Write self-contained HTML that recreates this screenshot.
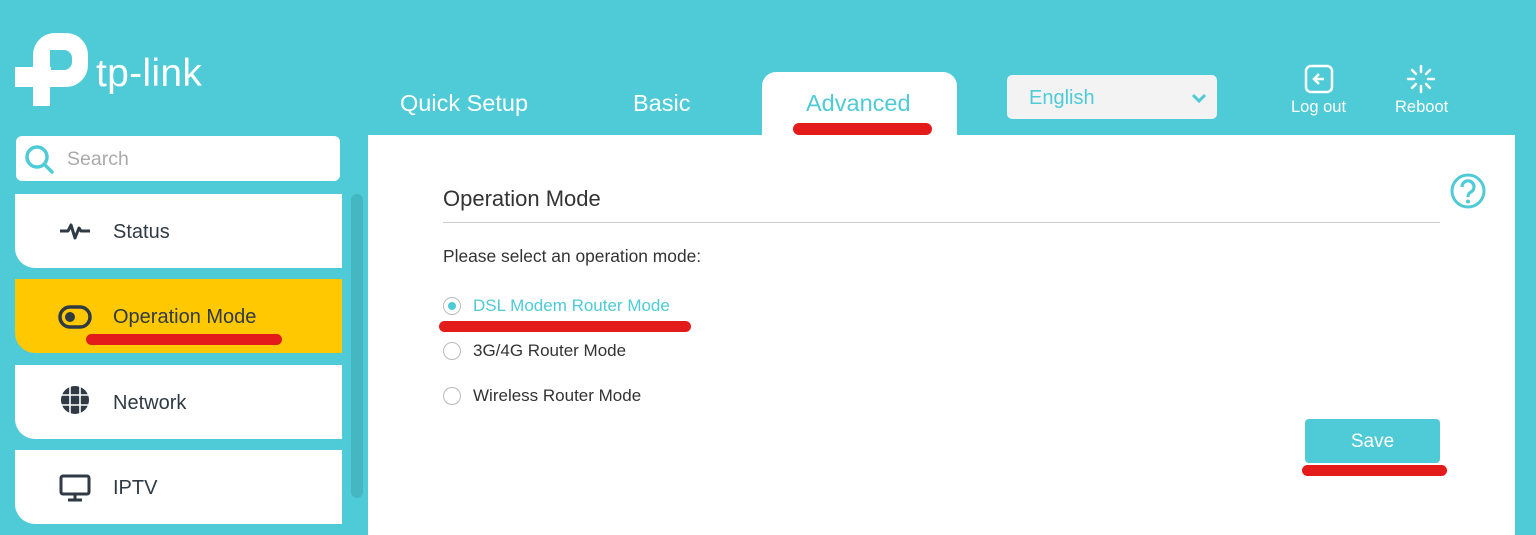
<!DOCTYPE html>
<html><head><meta charset="utf-8"><style>
*{margin:0;padding:0;box-sizing:border-box}
body{width:1536px;height:534px;background:#4ecbd6;position:relative;overflow:hidden;font-family:"Liberation Sans",Arial,sans-serif}
.abs{position:absolute}
.nav{color:#fff;font-size:23.5px;top:90px}
.side{position:absolute;left:15px;width:327px;height:74px;background:#fff;border-bottom-left-radius:20px}
.side span{position:absolute;left:98px;top:27px;font-size:20px;color:#2f3a44}
.side svg{position:absolute;left:43px;top:22px}
.red{position:absolute;background:#e41b1b;border-radius:6px;height:11px}
.radio{position:absolute;left:443px;width:18px;height:18px;border-radius:50%;border:1.5px solid #bbb;background:#fff}
.opt{position:absolute;left:473px;font-size:17px;color:#333}
</style></head><body>
<!-- logo -->
<svg class="abs" style="left:0;top:0" width="95" height="115" viewBox="0 0 95 115">
<path fill-rule="evenodd" fill="#fff" d="M33 106 V55 A22 22 0 0 1 55 33 H66 A22 22 0 0 1 88 55 V65 A22 22 0 0 1 66 87 H50 V106 Z M50 50 V70 H64 A8 8 0 0 0 72 62 V58 A8 8 0 0 0 64 50 Z"/>
<rect x="15" y="67" width="36" height="20" fill="#fff"/>
</svg>
<div class="abs" style="left:96px;top:52px;color:#fff;font-size:39px;letter-spacing:0.3px">tp-link</div>
<!-- search -->
<div class="abs" style="left:16px;top:136px;width:324px;height:45px;background:#fff;border-radius:6px"></div>
<svg class="abs" style="left:24px;top:143px" width="32" height="32" viewBox="0 0 32 32"><circle cx="13" cy="14" r="10" fill="none" stroke="#4ecbd6" stroke-width="3.5"/><path d="M21 22 L28 29" stroke="#4ecbd6" stroke-width="3.5" stroke-linecap="round"/></svg>
<div class="abs" style="left:67px;top:148px;font-size:19.5px;color:#aaa">Search</div>
<!-- sidebar -->
<div class="side" style="top:194px"><svg width="34" height="30" viewBox="0 0 34 30"><path d="M2 15 H10 L13 9 L17 22 L21 12 L23 15 H32" fill="none" stroke="#2f3a44" stroke-width="3" stroke-linejoin="round"/></svg><span>Status</span></div>
<div class="side" style="top:279px;background:#ffc800"><svg width="34" height="30" viewBox="0 0 34 30"><rect x="2" y="6" width="30" height="20" rx="10" fill="none" stroke="#2f3a44" stroke-width="3.5"/><circle cx="12" cy="16" r="5" fill="#2f3a44"/></svg><span>Operation Mode</span></div>
<div class="red" style="left:86px;top:334px;width:196px"></div>
<div class="side" style="top:365px"><svg width="34" height="34" viewBox="0 0 34 34" style="top:18px"><circle cx="17" cy="17" r="14" fill="#2f3a44"/><path d="M3 12H31M3 22H31M12 3V31M22 3V31" stroke="#fff" stroke-width="1.6"/></svg><span>Network</span></div>
<div class="side" style="top:450px"><svg width="34" height="30" viewBox="0 0 34 30"><rect x="3" y="4" width="28" height="18" rx="2" fill="none" stroke="#2f3a44" stroke-width="3"/><path d="M17 22V27M10 28H24" stroke="#2f3a44" stroke-width="3"/></svg><span>IPTV</span></div>
<div class="abs" style="left:351px;top:194px;width:12px;height:304px;background:#45b7c3;border-radius:6px"></div>
<!-- top nav -->
<div class="abs nav" style="left:400px">Quick Setup</div>
<div class="abs nav" style="left:633px">Basic</div>
<div class="abs" style="left:762px;top:72px;width:195px;height:70px;background:#fff;border-radius:14px 14px 0 0"></div>
<div class="abs nav" style="left:806px;color:#4ecbd6">Advanced</div>
<div class="red" style="left:793px;top:123px;width:139px;height:12px"></div>
<div class="abs" style="left:1007px;top:75px;width:210px;height:44px;background:#f3f3f3;border-radius:5px"></div>
<div class="abs" style="left:1029px;top:87px;font-size:20px;color:#4ecbd6">English</div>
<svg class="abs" style="left:1190px;top:92px" width="18" height="12" viewBox="0 0 18 12"><path d="M3 3L9 9L15 3" fill="none" stroke="#4ecbd6" stroke-width="3"/></svg>
<svg class="abs" style="left:1304px;top:64px" width="30" height="30" viewBox="0 0 30 30"><rect x="2" y="2" width="26" height="26" rx="5" fill="none" stroke="#fff" stroke-width="2.5"/><path d="M15 10L10 15L15 20M11 15H20" fill="none" stroke="#fff" stroke-width="2.5"/></svg>
<div class="abs" style="left:1291px;top:98px;color:#fff;font-size:16.5px">Log out</div>
<svg class="abs" style="left:1406px;top:64px" width="30" height="30" viewBox="0 0 30 30" stroke="#fff" stroke-width="2.5" stroke-linecap="round"><path d="M15 2V8M15 22V28M2 15H8M22 15H28M6 6L10 10M20 20L24 24M24 6L20 10M10 20L6 24"/></svg>
<div class="abs" style="left:1395px;top:98px;color:#fff;font-size:16.5px">Reboot</div>
<!-- main -->
<div class="abs" style="left:368px;top:135px;width:1147px;height:400px;background:#fff"></div>
<svg class="abs" style="left:1449px;top:172px" width="38" height="38" viewBox="0 0 38 38"><circle cx="19" cy="19" r="16" fill="none" stroke="#4ecbd6" stroke-width="3"/><path d="M13 15a6 6 0 1 1 9 5c-2 1-3 2-3 5" fill="none" stroke="#4ecbd6" stroke-width="3.2"/><circle cx="19" cy="29.5" r="2" fill="#4ecbd6"/></svg>
<div class="abs" style="left:443px;top:186px;font-size:22px;color:#333">Operation Mode</div>
<div class="abs" style="left:443px;top:222px;width:997px;height:1px;background:#ccc"></div>
<div class="abs" style="left:443px;top:246px;font-size:17.4px;color:#333">Please select an operation mode:</div>
<div class="radio" style="top:297px"><div style="position:absolute;left:3.5px;top:3.5px;width:8px;height:8px;border-radius:50%;background:#4ecbd6"></div></div>
<div class="opt" style="top:296px;color:#4ecbd6">DSL Modem Router Mode</div>
<div class="red" style="left:439px;top:321px;width:252px"></div>
<div class="radio" style="top:342px"></div>
<div class="opt" style="top:341px">3G/4G Router Mode</div>
<div class="radio" style="top:387px"></div>
<div class="opt" style="top:386px">Wireless Router Mode</div>
<div class="abs" style="left:1305px;top:419px;width:135px;height:44px;background:#4ecbd6;border-radius:4px;color:#fff;font-size:19px;text-align:center;line-height:46px">Save</div>
<div class="red" style="left:1302px;top:465px;width:145px"></div>
</body></html>
